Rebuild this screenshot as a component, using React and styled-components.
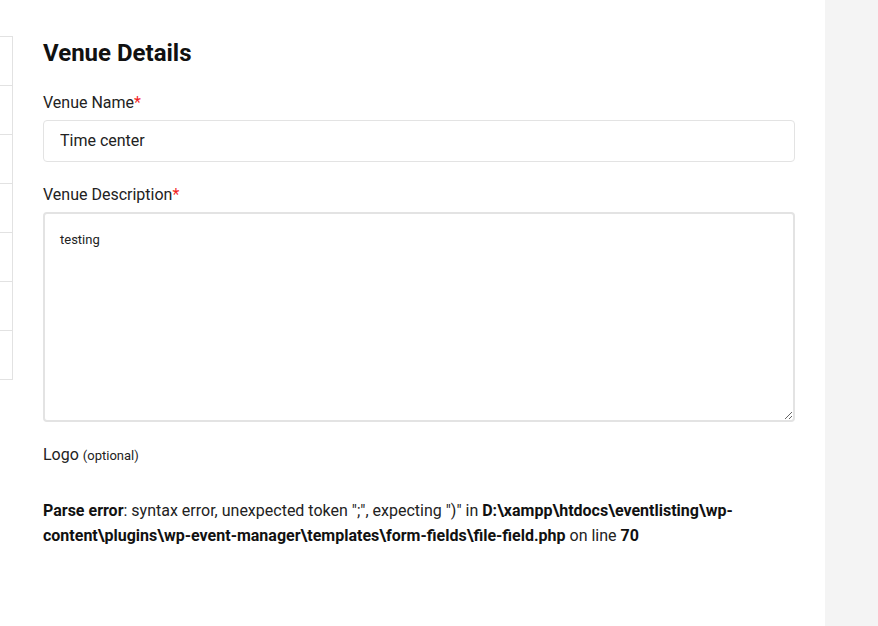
import React from 'react';
import styled, { createGlobalStyle } from 'styled-components';

const GlobalStyle = createGlobalStyle`
	html, body {
		margin: 0;
		padding: 0;
		background: #fff;
	}
	body {
		font-family: Roboto, "Liberation Sans", Arial, sans-serif;
		color: #222;
	}
`;

const sideRows = [1, 2, 3, 4, 5, 6, 7];

const App = () => {
	return (
		<Page>
			<GlobalStyle />
			<Sidebar>
				{ sideRows.map(row => <SideRow key={ row } />) }
			</Sidebar>

			<Content>
				<Heading>Venue Details</Heading>

				<Field>
					<Label>Venue Name<Required>*</Required></Label>
					<TextInput type='text' defaultValue='Time center' />
				</Field>

				<Field>
					<Label>Venue Description<Required>*</Required></Label>
					<TextArea defaultValue='testing' />
				</Field>

				<Field>
					<Label>Logo <Optional>(optional)</Optional></Label>
				</Field>

				<ErrorText>
					<b>Parse error</b>: syntax error, unexpected token ";", expecting ")" in <b>D:\xampp\htdocs\eventlisting\wp-content\plugins\wp-event-manager\templates\form-fields\file-field.php</b> on line <b>70</b>
				</ErrorText>
			</Content>

			<Aside />
		</Page>
	);
};

const Page = styled.div`
	display: flex;
	height: 100vh;
	overflow: hidden;
`;

const Sidebar = styled.div`
	width: 12px;
	flex-shrink: 0;
	align-self: flex-start;
	margin-top: 36px;
	border-top: 1px solid #e2e2e2;
	border-right: 1px solid #e2e2e2;
`;

const SideRow = styled.div`
	height: 48px;
	border-bottom: 1px solid #e2e2e2;
`;

const Content = styled.div`
	flex: 1;
	min-width: 0;
	padding: 38px 30px 0 30px;
`;

const Heading = styled.h2`
	margin: 0 0 23px;
	font-size: 24px;
	line-height: 30px;
	font-weight: 700;
	color: #111;
`;

const Field = styled.div`
	margin-bottom: 21px;
`;

const Label = styled.label`
	display: block;
	font-size: 16px;
	line-height: 24px;
	color: #222;
	margin-bottom: 5px;
`;

const Required = styled.span`
	color: #f21f1f;
`;

const Optional = styled.small`
	font-size: 13px;
	color: #222;
`;

const TextInput = styled.input`
	display: block;
	box-sizing: border-box;
	width: 100%;
	height: 42px;
	padding: 0 16px 2px;
	border: 1px solid #e3e3e3;
	border-radius: 4px;
	font-family: Roboto, "Liberation Sans", Arial, sans-serif;
	font-size: 16px;
	color: #222;
	background: #fff;
	outline: none;
`;

const TextArea = styled.textarea`
	display: block;
	box-sizing: border-box;
	width: 100%;
	height: 210px;
	padding: 18px 15px;
	border: 2px solid #e3e3e3;
	border-radius: 4px;
	font-family: Roboto, "Liberation Sans", Arial, sans-serif;
	font-size: 13px;
	color: #222;
	background: #fff;
	outline: none;
	resize: vertical;
`;

const ErrorText = styled.p`
	margin: 30px 0 0;
	font-size: 16px;
	line-height: 25px;
	color: #222;

	b {
		font-weight: 700;
		color: #111;
	}
`;

const Aside = styled.div`
	width: 53px;
	flex-shrink: 0;
	background: #f4f4f4;
`;

export default App;
